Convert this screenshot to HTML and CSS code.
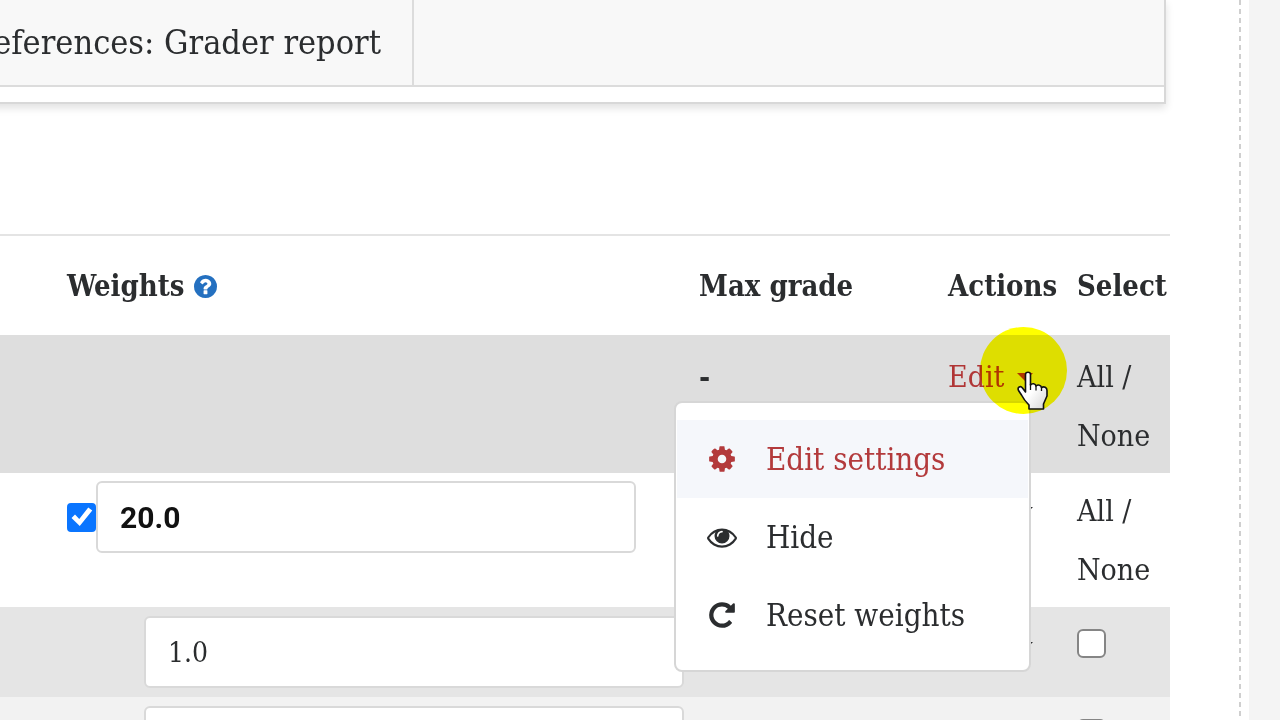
FILE: index.html
```html
<!DOCTYPE html>
<html lang="en">
<head>
    <meta charset="UTF-8">
    <meta name="viewport" content="width=device-width, initial-scale=1.0">
    <title>Gradebook setup</title>
    <link rel="stylesheet" href="styles.css">
</head>
<body>
    <div class="page">
        <main class="region">
            <nav class="tabs">
                <div class="tab-row">
                    <a class="tab" href="#">Preferences: Grader report</a>
                </div>
            </nav>

            <table class="grades">
                <colgroup>
                    <col class="col-name">
                    <col>
                    <col class="col-max">
                    <col class="col-actions">
                    <col class="col-select">
                </colgroup>
                <thead>
                    <tr>
                        <td></td>
                        <th>
                            <span class="heading">Weights
                                <svg class="help" viewBox="128 128 1536 1536"><path d="M1024 1376v-192q0-14-9-23t-23-9h-192q-14 0-23 9t-9 23v192q0 14 9 23t23 9h192q14 0 23-9t9-23zm256-672q0-88-55.500-163t-138.500-116-170-41q-243 0-371 213-15 24 8 42l132 100q7 6 19 6 16 0 25-12 53-68 86-92 34-24 86-24 48 0 85.500 26t37.500 59q0 38-20 61t-68 45q-63 28-115.500 86.500t-52.500 125.500v36q0 14 9 23t23 9h192q14 0 23-9t9-23q0-19 21.500-49.500t54.500-49.500q32-18 49-28.500t46-35 44.500-48 28-60.500 12.500-81zm384 192q0 209-103 385.500t-279.500 279.500-385.500 103-385.500-103-279.500-279.500-103-385.500 103-385.500 279.500-279.500 385.500-103 385.500 103 279.500 279.500 103 385.500z"/></svg>
                            </span>
                        </th>
                        <th>Max grade</th>
                        <th>Actions</th>
                        <th>Select</th>
                    </tr>
                </thead>
                <tbody>
                    <tr class="course">
                        <td></td>
                        <td></td>
                        <td><b>-</b></td>
                        <td>
                            <div class="actions">
                                <button class="edit open" type="button">Edit</button>
                                <div class="menu">
                                    <a class="item active" href="#">
                                        <svg class="icon" viewBox="-128 0 1792 1792"><path d="M1024 896q0-106-75-181t-181-75-181 75-75 181 75 181 181 75 181-75 75-181zm512-109v222q0 12-8 23t-20 13l-185 28q-19 54-39 91 35 50 107 138 10 12 10 25t-9 23q-27 37-99 108t-94 71q-12 0-26-9l-138-108q-44 23-91 38-16 136-29 186-7 28-36 28h-222q-14 0-24.500-8.500t-11.500-21.500l-28-184q-49-16-90-37l-141 107q-10 9-25 9-14 0-25-11-126-114-165-168-7-10-7-23 0-12 8-23 15-21 51-66.500t54-70.500q-27-50-41-99l-183-27q-13-2-21-12.500t-8-23.500v-222q0-12 8-23t19-13l186-28q14-46 39-92-40-57-107-138-10-12-10-24 0-10 9-23 26-36 98.500-107.500t94.500-71.500q13 0 26 10l138 107q44-23 91-38 16-136 29-186 7-28 36-28h222q14 0 24.500 8.500t11.500 21.500l28 184q49 16 90 37l142-107q9-9 24-9 13 0 25 10 129 119 165 170 7 8 7 22 0 12-8 23-15 21-51 66.500t-54 70.500q26 50 41 98l183 28q13 2 21 12.500t8 23.500z"/></svg>
                                        Edit settings
                                    </a>
                                    <a class="item" href="#">
                                        <svg class="icon" viewBox="0 0 1792 1792"><path d="M1664 960q-152-236-381-353 61 104 61 225 0 185-131.500 316.500t-316.500 131.500-316.500-131.500-131.500-316.500q0-121 61-225-229 117-381 353 133 205 333.500 326.500t434.500 121.500 434.500-121.500 333.500-326.500zm-720-384q0-20-14-34t-34-14q-125 0-214.500 89.500t-89.500 214.500q0 20 14 34t34 14 34-14 14-34q0-86 61-147t147-61q20 0 34-14t14-34zm848 384q0 34-20 69-140 230-376.500 368.500t-499.500 138.500-499.500-139-376.500-368q-20-35-20-69t20-69q140-229 376.500-368t499.500-139 499.500 139 376.500 368q20 35 20 69z"/></svg>
                                        Hide
                                    </a>
                                    <a class="item" href="#">
                                        <svg class="icon" viewBox="0 0 1792 1792"><path d="M1664 256v448q0 26-19 45t-45 19h-448q-42 0-59-40-17-39 14-69l138-138q-148-137-349-137-104 0-198.500 40.500t-163.500 109.500-109.500 163.500-40.500 198.500 40.500 198.500 109.500 163.500 163.500 109.500 198.500 40.500q119 0 225-52t179-147q7-10 23-12 15 0 25 9l137 138q9 8 9.500 20.500t-7.500 22.500q-109 132-264 204.500t-327 72.500q-156 0-298-61t-245-164-164-245-61-298 61-298 164-245 245-164 298-61q147 0 284.500 55.500t244.500 156.500l130-129q29-31 70-14 39 17 39 59z"/></svg>
                                        Reset weights
                                    </a>
                                </div>
                            </div>
                        </td>
                        <td>All /<br>None</td>
                    </tr>
                    <tr class="category">
                        <td></td>
                        <td>
                            <div class="weight">
                                <input class="check" type="checkbox" aria-label="Adjust weight" checked>
                                <input class="value adjusted" type="text" aria-label="Category weight" value="20.0">
                            </div>
                        </td>
                        <td></td>
                        <td><button class="edit" type="button">Edit</button></td>
                        <td>All /<br>None</td>
                    </tr>
                    <tr class="grade-item">
                        <td></td>
                        <td>
                            <div class="weight nested">
                                <input class="value" type="text" aria-label="Item weight" value="1.0">
                            </div>
                        </td>
                        <td></td>
                        <td><button class="edit" type="button">Edit</button></td>
                        <td><input class="check" type="checkbox" aria-label="Select item"></td>
                    </tr>
                    <tr class="grade-item light">
                        <td></td>
                        <td>
                            <div class="weight nested">
                                <input class="value" type="text" aria-label="Item weight">
                            </div>
                        </td>
                        <td></td>
                        <td></td>
                        <td><input class="check" type="checkbox" aria-label="Select item"></td>
                    </tr>
                </tbody>
            </table>
        </main>
    </div>

    <div class="spot"></div>
    <svg class="pointer" viewBox="0 0 32 40">
        <defs>
            <linearGradient id="hand" x1="0" y1="0" x2="1" y2="1">
                <stop offset="0.5" stop-color="#fff"/>
                <stop offset="1" stop-color="#d4d4d4"/>
            </linearGradient>
        </defs>
        <path fill="url(#hand)" stroke="#111" stroke-width="1.600" stroke-linejoin="round" d="M8.500 3.500C8.500 .5 13.500 .5 13.500 3.500V14C15 12 18.500 12.500 19 15C21 13.300 24 14 24.500 16.500C27 15 30 16.500 30 19.500V25L26.500 33V38H12V34C9 31 6 27 4.500 24L1.500 19.500C0 16 3.500 14.500 5.500 17L8.500 21Z"/>
        <path fill="none" stroke="#111" stroke-width="1.300" d="M13.500 13v6M19 14.500v5M24.500 16v4"/>
    </svg>
</body>
</html>
```
FILE: styles.css
```css
* {
    box-sizing: border-box;
}

body {
    margin: 0;
    height: 100vh;
    overflow: hidden;
    background: #f4f4f4;
    color: #2b2d2f;
    font-family: "DejaVu Serif Condensed", "DejaVu Serif", serif;
    font-size: 30px;
    line-height: 59px;
}

a {
    color: inherit;
    text-decoration: none;
}

.page {
    height: 100vh;
    margin-right: 31px;
    padding-right: 8px;
    overflow: hidden;
    background: #fff;
}

/* dashed guide down the right side */
.region {
    min-height: 100vh;
    padding-right: 71px;
    background: repeating-linear-gradient(#cfcfcf 0 5px, #fff 5px 9px) right / 2px 100% no-repeat;
}

/* tabs */
.tabs {
    margin: 0 4px 130px -12px;
    padding-bottom: 15px;
    border: solid #d8d8d8;
    border-width: 0 2px 2px 0;
    box-shadow: 0 4px 8px rgba(0, 0, 0, 0.12);
}

.tab-row {
    display: flex;
    background: #f8f8f8;
    border-bottom: 2px solid #dcdcdc;
}

.tab {
    display: flex;
    justify-content: flex-end;
    width: 426px;
    padding-right: 31px;
    border-right: 2px solid #dcdcdc;
    font-size: 34px;
    line-height: 85px;
    white-space: nowrap;
}

/* grade table */
.grades {
    width: 100%;
    table-layout: fixed;
    border-collapse: separate;
    border-spacing: 0;
    border-top: 2px solid #e4e4e4;
}

.col-name {
    width: 58px;
}

.col-max {
    width: 249px;
}

.col-actions {
    width: 129px;
}

.col-select {
    width: 102px;
}

th,
td {
    padding: 8px 0 8px 9px;
    text-align: left;
    vertical-align: top;
    white-space: nowrap;
}

th {
    padding-top: 21px;
    padding-bottom: 19px;
    font-size: 29px;
}

.heading {
    display: flex;
    align-items: center;
    gap: 10px;
}

.help {
    width: 23px;
    height: 23px;
    fill: #2470c0;
}

.course td {
    padding-top: 12px;
    padding-bottom: 8px;
    background: #dedede;
}

.grade-item td {
    padding-top: 9px;
    padding-bottom: 9px;
    background: #e5e5e5;
}

.grade-item.light td {
    background: #f2f2f2;
}

.weight {
    display: flex;
    align-items: center;
}

.weight.nested {
    padding-left: 77px;
}

.value {
    width: 540px;
    height: 72px;
    padding: 0 22px;
    border: 2px solid #d9d9d9;
    border-radius: 6px;
    background: #fff;
    color: inherit;
    font: inherit;
    font-size: 28px;
}

.value.adjusted {
    color: #111;
    font-family: Roboto, sans-serif;
    font-size: 30px;
    font-weight: bold;
}

.check {
    display: block;
    flex: none;
    width: 29px;
    height: 29px;
    margin: 0;
    appearance: none;
    border: 2px solid #858585;
    border-radius: 6px;
    background: #fff;
}

.check:checked {
    border-color: #0a75ff;
    border-radius: 4px;
    background: #0a75ff;
}

.check:checked::before {
    content: "";
    display: block;
    height: 100%;
    background: #fff;
    clip-path: polygon(10% 54%, 24% 40%, 41% 58%, 77% 12%, 93% 24%, 43% 86%);
}

td > .check {
    margin-top: 13px;
}

/* edit menu */
.actions {
    position: relative;
}

.edit {
    display: flex;
    align-items: center;
    gap: 13px;
    padding: 0;
    border: 0;
    background: none;
    color: inherit;
    font: inherit;
}

.edit::after {
    content: "";
    border: 8px solid transparent;
    border-top-color: currentColor;
    border-bottom: 0;
}

.edit.open {
    color: #b03535;
}

.menu {
    position: absolute;
    top: 54px;
    right: 37px;
    z-index: 1;
    width: 357px;
    padding: 17px 1px 16px;
    border: 2px solid #d6d6d6;
    border-radius: 8px;
    background: #fff;
    font-size: 31px;
}

.item {
    display: flex;
    align-items: center;
    gap: 29px;
    height: 78px;
    padding-left: 30px;
}

.item.active {
    background: #f5f7fb;
    color: #b33a3c;
}

.icon {
    width: 30px;
    height: 30px;
    fill: currentColor;
}

/* click highlight and mouse pointer */
.spot {
    position: absolute;
    top: 327px;
    left: 980px;
    z-index: 2;
    width: 87px;
    height: 87px;
    border-radius: 50%;
    background: #ff0;
    mix-blend-mode: multiply;
}

.pointer {
    position: absolute;
    top: 371px;
    left: 1017px;
    z-index: 3;
    width: 32px;
    height: 40px;
}
```
